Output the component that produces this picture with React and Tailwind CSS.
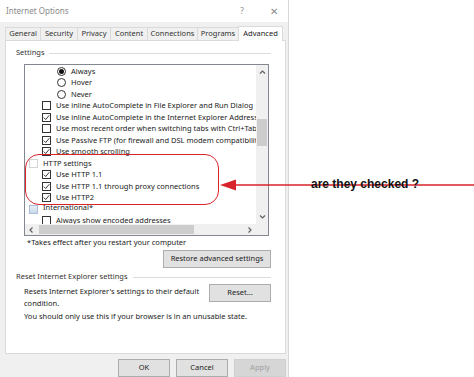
import React from 'react';

const font = { fontFamily: '"Noto Sans", "Liberation Sans", sans-serif' };

const Check = ({ on }) => (
  <span className="inline-flex items-center justify-center w-[9px] h-[9px] border border-[#333] bg-white shrink-0">
    {on && (
      <svg width="7" height="7" viewBox="0 0 7 7">
        <path d="M0.8 3.6 L2.7 5.5 L6.3 1.2" fill="none" stroke="#222" strokeWidth="0.9" />
      </svg>
    )}
  </span>
);

const Radio = ({ on }) => (
  <span className="inline-flex items-center justify-center w-[9px] h-[9px] rounded-full border border-[#333] bg-white shrink-0">
    {on && <span className="w-[5px] h-[5px] rounded-full bg-[#111]" />}
  </span>
);

const Row = ({ indent, children }) => (
  <div className={`flex items-center gap-[5px] h-[11.5px] whitespace-nowrap ${indent}`}>{children}</div>
);

const items = [
  { kind: 'radio', on: true, text: 'Always' },
  { kind: 'radio', on: false, text: 'Hover' },
  { kind: 'radio', on: false, text: 'Never' },
  { kind: 'check', on: false, text: 'Use inline AutoComplete in File Explorer and Run Dialog' },
  { kind: 'check', on: true, text: 'Use inline AutoComplete in the Internet Explorer Address' },
  { kind: 'check', on: false, text: 'Use most recent order when switching tabs with Ctrl+Tab' },
  { kind: 'check', on: true, text: 'Use Passive FTP (for firewall and DSL modem compatibility' },
  { kind: 'check', on: true, text: 'Use smooth scrolling' },
  { kind: 'group', text: 'HTTP settings' },
  { kind: 'check', on: true, text: 'Use HTTP 1.1' },
  { kind: 'check', on: true, text: 'Use HTTP 1.1 through proxy connections' },
  { kind: 'check', on: true, text: 'Use HTTP2' },
  { kind: 'intl', text: 'International*' },
  { kind: 'check', on: false, text: 'Always show encoded addresses' },
];

const tabs = [
  { t: 'General', w: 'w-[35px]' },
  { t: 'Security', w: 'w-[37px]' },
  { t: 'Privacy', w: 'w-[33px]' },
  { t: 'Content', w: 'w-[37px]' },
  { t: 'Connections', w: 'w-[50px]' },
  { t: 'Programs', w: 'w-[41px]' },
];

const Btn = ({ children, w, disabled }) => (
  <div
    className={`flex items-center justify-center h-[18px] ${w} border ${
      disabled ? 'border-[#d0d0d0] bg-[#d6d6d6] text-[#a0a0a0]' : 'border-[#adadad] bg-[#e1e1e1] text-[#222]'
    }`}
  >
    {children}
  </div>
);

export default function App() {
  return (
    <div className="relative w-[474px] h-[377px] bg-white overflow-hidden text-[7.5px] text-[#222]" style={font}>
      <div className="w-[289px] h-full bg-[#f0f0f0] border-r border-[#d8d8d8] flex flex-col">
        {/* title bar */}
        <div className="h-[22px] bg-white flex items-center pl-[6px] text-[8px] text-[#8a8a8a]">
          <span className="flex-1">Internet Options</span>
          <span className="w-[12px] text-center mr-[20px]">?</span>
          <span className="w-[12px] text-center mr-[8px] text-[10px] font-light">✕</span>
        </div>

        {/* tabs */}
        <div className="flex items-end h-[18px] pl-[5px]">
          {tabs.map(({ t, w }) => (
            <div key={t} className={`h-[13px] ${w} flex items-center justify-center border-t border-l border-[#dadada] bg-[#f0f0f0] text-[#333]`}>
              {t}
            </div>
          ))}
          <div className="h-[15px] w-[45px] flex items-center justify-center bg-white border-t border-l border-r border-[#dadada] -mb-[1px] relative z-10">
            Advanced
          </div>
        </div>

        {/* panel */}
        <div className="ml-[5px] w-[281px] h-[314px] bg-white border border-[#dadada] flex flex-col pl-[10px] pr-[14px]">
          <div className="flex items-center mt-[6px] h-[12px] text-[#333]">
            <span>Settings</span>
            <div className="flex-1 h-px bg-[#dcdcdc] ml-[4px]" />
          </div>

          <div className="ml-[8px] mt-[5px] w-[245px] h-[172px] border border-[#828790] bg-white flex flex-col">
            <div className="flex h-[159px]">
              <div className="flex-1 overflow-hidden pt-[0.5px]">
                {items.map((it, i) => {
                  if (it.kind === 'radio')
                    return (
                      <Row key={i} indent="pl-[32px]">
                        <Radio on={it.on} />
                        <span>{it.text}</span>
                      </Row>
                    );
                  if (it.kind === 'check')
                    return (
                      <Row key={i} indent="pl-[17px]">
                        <Check on={it.on} />
                        <span>{it.text}</span>
                      </Row>
                    );
                  if (it.kind === 'group')
                    return (
                      <Row key={i} indent="pl-[4px]">
                        <span className="w-[9px] h-[9px] border border-[#d4d4d4] bg-white shrink-0" />
                        <span>{it.text}</span>
                      </Row>
                    );
                  return (
                    <Row key={i} indent="pl-[4px]">
                      <span className="w-[9px] h-[9px] border border-[#a9bdd6] bg-gradient-to-b from-[#e8eff8] to-[#c9d8ea] shrink-0" />
                      <span className="-mt-[3px]">{it.text}</span>
                    </Row>
                  );
                })}
              </div>
              {/* vertical scrollbar */}
              <div className="w-[12px] bg-[#f0f0f0] flex flex-col items-center">
                <svg width="7" height="12" viewBox="0 0 7 12" className="mt-[1px]">
                  <path d="M1 7.5 L3.5 5 L6 7.5" fill="none" stroke="#606060" strokeWidth="1.2" />
                </svg>
                <div className="mt-[41px] w-[10px] h-[27px] bg-[#cdcdcd]" />
                <div className="flex-1" />
                <svg width="7" height="12" viewBox="0 0 7 12" className="mb-[1px]">
                  <path d="M1 4.5 L3.5 7 L6 4.5" fill="none" stroke="#606060" strokeWidth="1.2" />
                </svg>
              </div>
            </div>
            {/* horizontal scrollbar */}
            <div className="h-[11px] bg-[#f0f0f0] flex items-center">
              <svg width="12" height="10" viewBox="0 0 12 10">
                <path d="M7.5 2.5 L5 5 L7.5 7.5" fill="none" stroke="#606060" strokeWidth="1.2" />
              </svg>
              <div className="ml-[2px] w-[155px] h-[9px] bg-[#cdcdcd]" />
              <div className="flex-1" />
              <svg width="12" height="10" viewBox="0 0 12 10" className="mr-[12px]">
                <path d="M4.5 2.5 L7 5 L4.5 7.5" fill="none" stroke="#606060" strokeWidth="1.2" />
              </svg>
            </div>
          </div>

          <div className="ml-[11px] mt-[1px] h-[12px] flex items-center">*Takes effect after you restart your computer</div>
          <div className="flex justify-end mt-[1px]">
            <Btn w="w-[108px]">Restore advanced settings</Btn>
          </div>

          <div className="flex items-center mt-[3px] h-[12px] text-[#333]">
            <span>Reset Internet Explorer settings</span>
            <div className="flex-1 h-px bg-[#dcdcdc] ml-[5px]" />
          </div>
          <div className="flex items-start mt-[1px] ml-[8px]">
            <div className="flex-1 leading-[12px] pt-[1px]">
              Resets Internet Explorer&apos;s settings to their default
              <br />
              condition.
            </div>
            <Btn w="w-[62px]">Reset...</Btn>
          </div>
          <div className="ml-[8px] mt-[2px] h-[12px] flex items-center">
            You should only use this if your browser is in an unusable state.
          </div>
        </div>

        {/* bottom buttons */}
        <div className="flex justify-end gap-[6px] pr-[2px] mt-[5px]">
          <Btn w="w-[52px]">OK</Btn>
          <Btn w="w-[52px]">Cancel</Btn>
          <Btn w="w-[52px]" disabled>Apply</Btn>
        </div>
      </div>

      {/* annotation overlay */}
      <div className="absolute left-[25px] top-[154px] w-[194px] h-[51px] border-[1.5px] border-[#d9232b] rounded-[14px]" />
      <svg className="absolute left-[220px] top-[178px]" width="254" height="14" viewBox="0 0 254 14">
        <path d="M0 7 L16 1.5 L16 12.5 Z" fill="#d9232b" />
        <path d="M14 7 L254 7" stroke="#d9232b" strokeWidth="1.5" />
      </svg>
      <div
        className="absolute left-[311px] top-[175px] text-[12px] font-bold text-[#111]"
        style={{ fontFamily: '"Liberation Sans", Arial, sans-serif' }}
      >
        are they checked ?
      </div>
    </div>
  );
}
